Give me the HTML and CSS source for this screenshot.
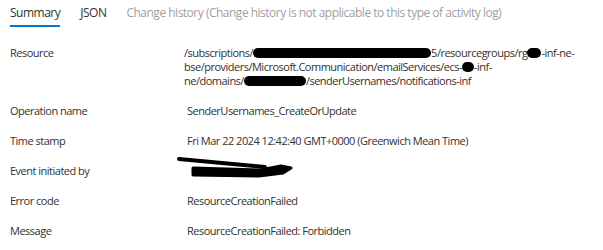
FILE: index.html
```html
<!DOCTYPE html>
<html lang="en">
<head>
  <meta charset="UTF-8">
  <title>Activity log details</title>
  <link rel="stylesheet" href="styles.css">
</head>
<body>
  <!-- Вкладки -->
  <div class="tabs">
    <span class="tab active">Summary</span>
    <span class="tab">JSON</span>
    <span class="tab disabled">Change history (Change history is not applicable to this type of activity log)</span>
  </div>

  <!-- Таблица свойств -->
  <div class="props">
    <div class="row">
      <div class="label">Resource</div>
      <div class="value resource">
        /subscriptions/<span class="redact r1"></span>5/resourcegroups/rg<span class="redact r2"></span>-inf-ne-<br>
        bse/providers/Microsoft.Communication/emailServices/ecs-<span class="redact r3"></span>-inf-<br>
        ne/domains/<span class="redact r4"></span>/senderUsernames/notifications-inf
      </div>
    </div>
    <div class="row">
      <div class="label">Operation name</div>
      <div class="value">SenderUsernames_CreateOrUpdate</div>
    </div>
    <div class="row">
      <div class="label">Time stamp</div>
      <div class="value">Fri Mar 22 2024 12:42:40 GMT+0000 (Greenwich Mean Time)</div>
    </div>
    <div class="row">
      <div class="label">Event initiated by</div>
      <div class="value scribble">
        <svg width="130" height="28" viewBox="0 0 130 28">
          <path d="M4 4 L90 12" stroke="#000" stroke-width="4" stroke-linecap="round" fill="none"/>
          <path d="M18 13 L85 15 L106 11 L116 13 L108 18 L84 21 L18 20 Z" fill="#000" stroke="#000" stroke-width="3" stroke-linejoin="round"/>
        </svg>
      </div>
    </div>
    <div class="row">
      <div class="label">Error code</div>
      <div class="value">ResourceCreationFailed</div>
    </div>
    <div class="row">
      <div class="label">Message</div>
      <div class="value">ResourceCreationFailed: Forbidden</div>
    </div>
  </div>
</body>
</html>
```

FILE: styles.css
```css
body {
  margin: 0;
  background: #fff;
  color: #323130;
  font-family: "Open Sans", "Noto Sans", sans-serif;
  font-size: 11px;
  letter-spacing: -0.5px;
}

/* Вкладки */
.tabs {
  display: flex;
  gap: 20px;
  padding: 4px 0 0 10px;
  height: 23px;
}

.tab {
  font-size: 12px;
  line-height: 18px;
  height: 21px;
}

.tab.active {
  border-bottom: 2px solid #0078d4;
}

.tab.disabled {
  color: #a19f9d;
}

/* Свойства */
.props {
  padding-top: 11px;
}

.row {
  display: flex;
  padding: 8px 0;
  line-height: 14px;
}

.label {
  width: 177px;
  padding-left: 10px;
  flex-shrink: 0;
}

.value.resource {
  margin-left: -3px;
}

.redact {
  display: inline-block;
  height: 10px;
  background: #000;
  border-radius: 6px;
  vertical-align: -1px;
}

.r1 { width: 178px; }
.r2 { width: 14px; }
.r3 { width: 12px; }
.r4 { width: 62px; }

.scribble {
  height: 14px;
  position: relative;
}

.scribble svg {
  position: absolute;
  left: -12px;
  top: -9px;
}
```
